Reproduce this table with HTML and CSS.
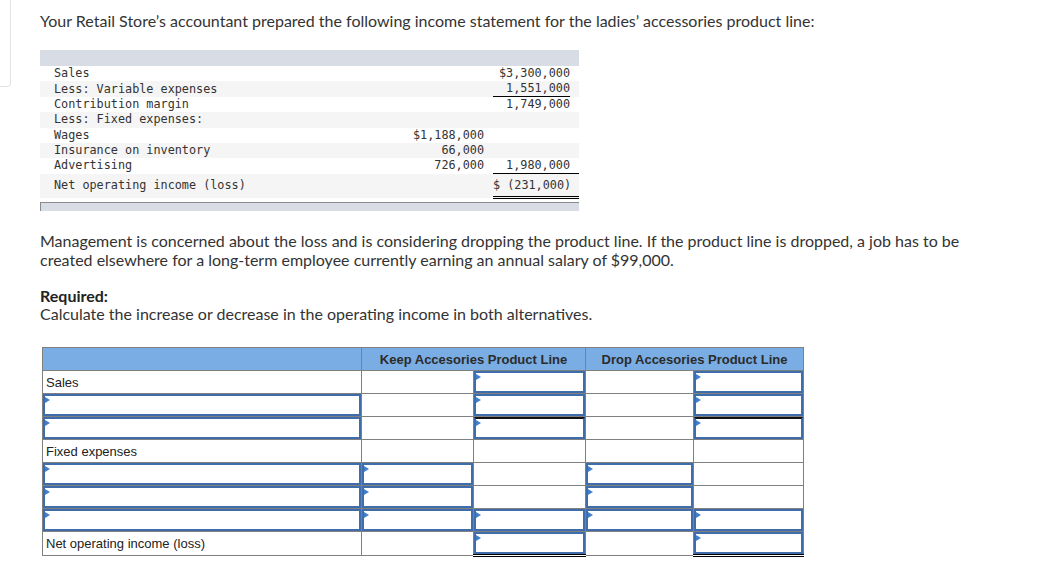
FILE: index.html
```html
<!DOCTYPE html>
<html>
<head>
<meta charset="utf-8">
<link rel="stylesheet" href="styles.css">
</head>
<body>
<div class="page">
  <div class="edge"></div>
  <main class="content">
    <p class="lead">Your Retail Store’s accountant prepared the following income statement for the ladies’ accessories product line:</p>

    <table class="stmt">
      <colgroup><col class="c-label"><col class="c-a"><col class="c-gap"><col class="c-b"></colgroup>
      <tr class="hdr"><td colspan="4"></td></tr>
      <tr><td>Sales</td><td></td><td></td><td class="num">$3,300,000</td></tr>
      <tr class="alt"><td>Less: Variable expenses</td><td></td><td></td><td class="num"><span class="short-ul">1,551,000</span></td></tr>
      <tr><td>Contribution margin</td><td></td><td></td><td class="num">1,749,000</td></tr>
      <tr class="alt"><td>Less: Fixed expenses:</td><td></td><td></td><td></td></tr>
      <tr><td>Wages</td><td class="num">$1,188,000</td><td></td><td></td></tr>
      <tr class="alt"><td>Insurance on inventory</td><td class="num">66,000</td><td></td><td></td></tr>
      <tr><td>Advertising</td><td class="num">726,000</td><td></td><td class="num ul">1,980,000</td></tr>
      <tr class="alt net"><td>Net operating income (loss)</td><td></td><td></td><td class="num dbl">$ (231,000)</td></tr>
    </table>
    <div class="stmt-foot"></div>

    <p class="para">Management is concerned about the loss and is considering dropping the product line. If the product line is dropped, a job has to be created elsewhere for a long-term employee currently earning an annual salary of $99,000.</p>

    <p class="req"><strong>Required:</strong><br>Calculate the increase or decrease in the operating income in both alternatives.</p>

    <table class="ans">
      <colgroup><col class="a1"><col class="a2"><col class="a3"><col class="a4"><col class="a5"></colgroup>
      <tr class="ahdr"><th></th><th colspan="2">Keep Accesories Product Line</th><th colspan="2">Drop Accesories Product Line</th></tr>
      <tr><td class="lbl">Sales</td><td></td><td><div class="inp"></div></td><td></td><td><div class="inp"></div></td></tr>
      <tr><td><div class="inp"></div></td><td></td><td><div class="inp"></div></td><td></td><td><div class="inp"></div></td></tr>
      <tr><td><div class="inp"></div></td><td></td><td><div class="inp topline"></div></td><td></td><td><div class="inp topline"></div></td></tr>
      <tr><td class="lbl">Fixed expenses</td><td></td><td></td><td></td><td></td></tr>
      <tr><td><div class="inp"></div></td><td><div class="inp"></div></td><td></td><td><div class="inp"></div></td><td></td></tr>
      <tr><td><div class="inp"></div></td><td><div class="inp"></div></td><td></td><td><div class="inp"></div></td><td></td></tr>
      <tr><td><div class="inp"></div></td><td><div class="inp"></div></td><td><div class="inp"></div></td><td><div class="inp"></div></td><td><div class="inp"></div></td></tr>
      <tr class="atotal"><td class="lbl">Net operating income (loss)</td><td class="tl"></td><td class="tl dbl"><div class="inp"></div></td><td class="tl"></td><td class="tl dbl"><div class="inp"></div></td></tr>
    </table>
  </main>
</div>
</body>
</html>
```

FILE: styles.css
```css
html, body { margin: 0; padding: 0; background: #fff; }
body { font-family: Lato, "Open Sans", sans-serif; color: #333; }

.page { display: flex; align-items: flex-start; }
.edge {
  flex: 0 0 10px; height: 86px;
  border-right: 1px solid #e3e3e3; border-bottom: 1px solid #e3e3e3;
  border-bottom-right-radius: 4px;
}
.content { padding-left: 29px; padding-top: 11px; width: 960px; }

.lead { margin: 0; font-size: 16px; line-height: 20px; }

.stmt {
  margin-top: 19px; width: 539px; border-collapse: collapse; table-layout: fixed;
  font-family: "DejaVu Sans Mono", "Liberation Mono", monospace; font-size: 11.8px; color: #333;
}
.c-label { width: 360px; } .c-a { width: 86px; } .c-gap { width: 7px; } .c-b { width: 86px; }
.stmt td { padding: 0; height: 15.2px; line-height: 15px; white-space: pre; }
.stmt td:first-child { padding-left: 14px; }
.stmt .hdr td { background: #d7dce5; height: 16px; }
.stmt .alt td { background: #f5f5f5; }
.stmt .num { text-align: right; padding-right: 2px; }
.stmt td.num:last-child { padding-right: 9px; }
.stmt .short-ul { display: inline-block; border-bottom: 1px solid #000; padding-left: 13px; line-height: 15px; }
.stmt td.ul { border-bottom: 1px solid #000; }
.stmt .net td { height: 22px; }
.stmt td.dbl { border-bottom: 3px double #000; padding-right: 2px; }
.stmt-foot {
  margin-top: 3px; width: 538px; height: 8px;
  background: #d7dce5; border-top: 1px solid #8a8a8a; border-left: 1px solid #8a8a8a;
}

.para { margin: 20px 0 0; font-size: 16px; line-height: 19px; }
.req { margin: 18px 0 0; font-size: 16px; line-height: 18px; }
.req strong { font-weight: 700; color: #222; }

.ans {
  margin: 24px 0 0 2px; border-collapse: collapse; table-layout: fixed; width: 761px;
  font-family: "Liberation Sans", Arial, sans-serif; font-size: 13px; color: #222;
}
.a1 { width: 319px; } .a2 { width: 112px; } .a3 { width: 112px; } .a4 { width: 108px; } .a5 { width: 110px; }
.ans th, .ans td { border: 1px solid #808080; padding: 0; height: 22px; }
.ans th { background: #79ade3; font-weight: 700; color: #2b2b2b; text-align: center; }
.ans td.lbl { padding-left: 3px; }
.ans td.tl { border-top: 1px solid #000; }
.ans td.dbl { border-bottom: 3px double #000; }

.inp {
  position: relative; box-sizing: border-box; height: 22px; width: 100%;
  border: 2px solid #3f6dac;
}
.inp::before {
  content: ""; position: absolute; left: 0; top: 1px;
  border-left: 5px solid #3f7fcc; border-top: 3px solid transparent; border-bottom: 3px solid transparent;
}
.inp.topline { border-top-color: #111; }
```
